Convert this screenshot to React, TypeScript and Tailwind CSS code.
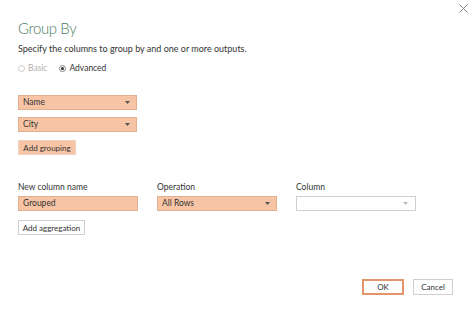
import React from "react";

const font = { fontFamily: 'Lato, "Noto Sans", sans-serif' };

function Caret({ light }: { light?: boolean }) {
  return (
    <svg width="5" height="3" viewBox="0 0 5 3" className="shrink-0">
      <path d="M0 0 L5 0 L2.5 3 Z" fill={light ? "#b8b8b8" : "#555"} />
    </svg>
  );
}

function Select({ label, w = "w-[119px]" }: { label: string; w?: string }) {
  return (
    <div className={`${w} h-[15px] bg-[#f7c5a6] border border-[#e0b090] flex items-center justify-between pl-[4px] pr-[6px] text-[8.5px] text-[#333]`}>
      <span className="leading-none">{label}</span>
      <Caret />
    </div>
  );
}

export default function App() {
  return (
    <div className="w-[474px] h-[313px] bg-white relative overflow-hidden" style={font}>
      <svg className="absolute left-[459px] top-[4px]" width="9" height="9" viewBox="0 0 9 9">
        <path d="M0.5 0.5 L8.5 8.5 M8.5 0.5 L0.5 8.5" stroke="#888" strokeWidth="1" />
      </svg>
      <div className="pl-[18px] pt-[18px] flex flex-col">
        <div className="text-[15px] leading-[20px] font-light tracking-[-0.4px] text-[#4d7a5c]">Group By</div>
        <div className="mt-[5px] text-[9px] leading-[12px] text-[#333] whitespace-nowrap">Specify the columns to group by and one or more outputs.</div>
        <div className="mt-[7px] flex items-center text-[8.5px] leading-[12px]">
          <span className="w-[7px] h-[7px] rounded-full border border-[#ccc] mr-[3px]" />
          <span className="text-[#b0b0b0]">Basic</span>
          <span className="ml-[12px] w-[7px] h-[7px] rounded-full border border-[#888] mr-[3px] flex items-center justify-center">
            <span className="w-[3px] h-[3px] rounded-full bg-[#333]" />
          </span>
          <span className="text-[#333]">Advanced</span>
        </div>
        <div className="mt-[21px] flex flex-col gap-[7px]">
          <Select label="Name" />
          <Select label="City" />
        </div>
        <div className="mt-[8px] w-[58px] h-[15px] bg-[#f7c5a6] border border-[#ecd3c2] flex items-center justify-center text-[8px] text-[#333] leading-none whitespace-nowrap">
          Add grouping
        </div>
        <div className="mt-[26px] flex gap-[19px] text-[8.5px] text-[#333] leading-[12px]">
          <div className="w-[120px] flex flex-col">
            <span>New column name</span>
            <div className="mt-[3px] h-[15px] bg-[#f7c5a6] border border-[#e0b090] flex items-center pl-[4px] text-[8.5px] leading-none">Grouped</div>
          </div>
          <div className="w-[120px] flex flex-col">
            <span>Operation</span>
            <div className="mt-[3px]"><Select label="All Rows" w="w-[120px]" /></div>
          </div>
          <div className="w-[120px] flex flex-col">
            <span>Column</span>
            <div className="mt-[3px] h-[15px] bg-white border border-[#cfcfcf] flex items-center justify-end pr-[7px]">
              <Caret light />
            </div>
          </div>
        </div>
        <div className="mt-[9px] w-[67px] h-[15px] bg-white border border-[#d0d0d0] flex items-center justify-center text-[8px] text-[#333] leading-none whitespace-nowrap">
          Add aggregation
        </div>
        <div className="mt-[44px] flex justify-end gap-[9px] pr-[21px]">
          <div className="w-[42px] h-[16px] border-2 border-[#e3946a] bg-white flex items-center justify-center text-[8px] text-[#333] leading-none">OK</div>
          <div className="w-[40px] h-[16px] border border-[#cfcfcf] bg-white flex items-center justify-center text-[8px] text-[#333] leading-none">Cancel</div>
        </div>
      </div>
    </div>
  );
}
